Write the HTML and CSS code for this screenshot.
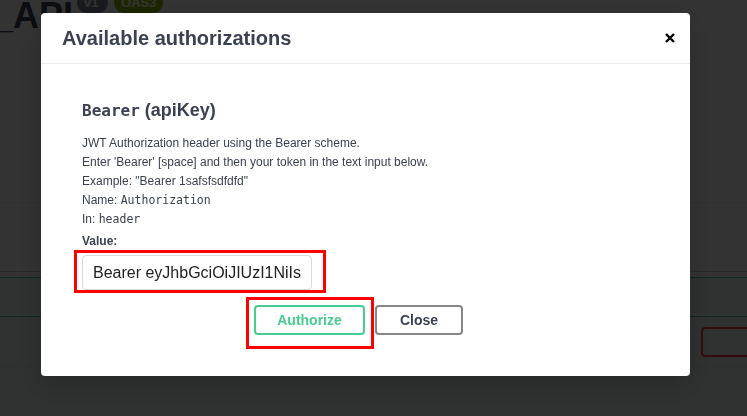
FILE: index.html
```html
<!DOCTYPE html>
<html lang="en">
<head>
  <meta charset="UTF-8" />
  <meta name="viewport" content="width=device-width, initial-scale=1.0" />
  <title>Available authorizations</title>
  <link rel="stylesheet" href="styles.css">
</head>
<body>
  <div class="page">
    <div class="info">
      <h2 class="title">_API</h2>
      <span class="badge version">v1</span>
      <span class="badge oas">OAS3</span>
    </div>
    <div class="scheme-container"></div>
    <div class="opblock">
      <div class="opblock-summary"></div>
      <div class="opblock-body">
        <span class="btn-cancel"></span>
      </div>
    </div>
  </div>

  <div class="backdrop">
    <div class="modal">
      <div class="modal-header">
        <h3>Available authorizations</h3>
        <button class="close-btn" type="button" aria-label="Close">
          <svg width="10" height="10" viewBox="0 0 10 10"><path d="M1 1L9 9M9 1L1 9" stroke="#000" stroke-width="2.4" /></svg>
        </button>
      </div>

      <div class="modal-body">
        <h4 class="auth-title"><code>Bearer</code> (apiKey)</h4>
        <div class="auth-desc">
          <p>JWT Authorization header using the Bearer scheme.</p>
          <p>Enter 'Bearer' [space] and then your token in the text input below.</p>
          <p>Example: "Bearer 1safsfsdfdfd"</p>
          <p>Name: <code>Authorization</code></p>
          <p>In: <code>header</code></p>
        </div>
        <label class="value-label" for="token">Value:</label>
        <div class="highlight token-wrap">
          <input class="token-input" id="token" type="text" value="Bearer eyJhbGciOiJIUzI1NiIs" />
        </div>
        <div class="auth-actions">
          <div class="highlight btn-wrap">
            <button class="btn btn-authorize" type="button">Authorize</button>
          </div>
          <button class="btn btn-close" type="button">Close</button>
        </div>
      </div>
    </div>
  </div>
</body>
</html>
```

FILE: styles.css
```css
body {
  margin: 0;
  font-family: 'Liberation Sans', Arial, sans-serif;
  background: #fff;
  overflow: hidden;
}

/* page behind the dialog */
.page {
  height: 416px;
}
.info {
  display: flex;
  align-items: flex-start;
}
.title {
  margin: -4px 0 0 -7px;
  font-size: 36px;
  line-height: 40px;
  font-weight: bold;
  color: #3b4151;
}
.badge {
  margin-top: -7px;
  height: 20px;
  line-height: 20px;
  padding: 0 7px;
  border-radius: 57px;
  color: #fff;
  font-size: 13px;
  font-weight: bold;
}
.badge.version {
  margin-left: 4px;
  width: 17px;
  background: #7d8492;
}
.badge.oas {
  margin-left: 6px;
  background: #89bf04;
}
.scheme-container {
  margin-top: 166px;
  height: 68px;
  border-top: 1px solid #eee;
  border-bottom: 1px solid #d5d6da;
}
.opblock {
  margin-top: 5px;
  height: 200px;
  border-top: 1px solid #49cc90;
  background: rgba(73, 204, 144, 0.1);
}
.opblock-summary {
  height: 38px;
  border-bottom: 1px solid #49cc90;
}
.opblock-body {
  display: flex;
  justify-content: flex-end;
  padding: 10px 0;
  border-bottom: 1px solid #ebebeb;
}
.btn-cancel {
  width: 89px;
  height: 30px;
  margin-right: -43px;
  box-sizing: border-box;
  border: 2px solid #f93e3e;
  border-radius: 4px;
}

/* dialog */
.backdrop {
  position: fixed;
  inset: 0;
  padding: 13px 0 0 41px;
  background: rgba(0, 0, 0, 0.8);
}
.modal {
  width: 649px;
  background: #fff;
  border-radius: 4px;
  box-shadow: 0 10px 30px rgba(0, 0, 0, 0.2);
}
.modal-header {
  display: flex;
  align-items: center;
  justify-content: space-between;
  height: 50px;
  padding: 0 15px 0 21px;
  border-bottom: 1px solid #ebebeb;
}
.modal-header h3 {
  margin: 0;
  font-size: 20px;
  font-weight: bold;
  color: #3b4151;
}
.close-btn {
  display: flex;
  padding: 0;
  border: none;
  background: none;
  cursor: pointer;
}
.modal-body {
  padding: 35px 41px 27px;
  color: #3b4151;
}
.auth-title {
  margin: 0 0 14px;
  font-size: 18px;
  line-height: 22px;
  font-weight: bold;
}
.auth-title code {
  font-family: 'DejaVu Sans Mono', monospace;
  font-size: 16px;
}
.auth-desc p {
  margin: 0 0 5px;
  font-size: 12px;
  line-height: 14px;
}
.auth-desc code {
  font-family: 'DejaVu Sans Mono', monospace;
  font-size: 11.5px;
  line-height: 1;
}
.value-label {
  display: block;
  margin-top: 8px;
  font-size: 12px;
  line-height: 14px;
  font-weight: bold;
}
.highlight {
  border: 3px solid #f00;
  width: fit-content;
}
.token-wrap {
  margin: 2px 0 0 -8px;
  padding: 2px 11px 0 5px;
}
.token-input {
  display: block;
  width: 230px;
  height: 35px;
  box-sizing: border-box;
  padding: 0 10px;
  border: 1px solid #d9d9d9;
  border-radius: 4px;
  font-family: 'Liberation Sans', Arial, sans-serif;
  font-size: 16px;
  color: #222;
}
.auth-actions {
  display: flex;
  align-items: flex-start;
  margin-top: 4px;
  padding-left: 164px;
}
.btn-wrap {
  padding: 5px 6px 11px 5px;
}
.btn {
  display: block;
  height: 30px;
  box-sizing: border-box;
  padding: 0;
  border: 2px solid;
  border-radius: 4px;
  background: transparent;
  font-family: 'Liberation Sans', Arial, sans-serif;
  font-size: 14px;
  font-weight: bold;
  cursor: pointer;
}
.btn-authorize {
  width: 111px;
  border-color: #49cc90;
  color: #49cc90;
}
.btn-close {
  width: 88px;
  margin: 8px 0 0 1px;
  border-color: #888;
  color: #3b4151;
}
```
